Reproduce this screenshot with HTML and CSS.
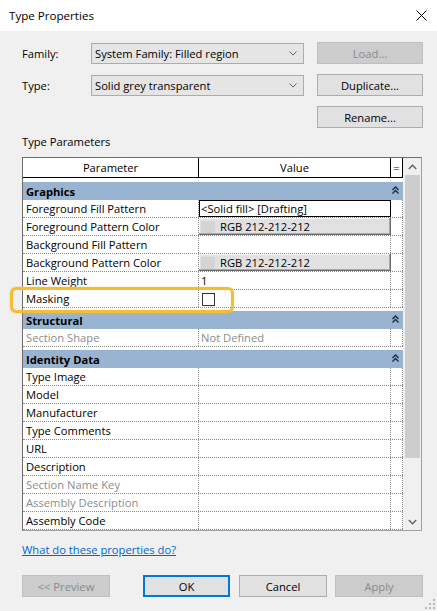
FILE: index.html
```html
<!DOCTYPE html>
<html>
<head>
<meta charset="utf-8">
<title>Type Properties</title>
<link rel="stylesheet" href="styles.css">
</head>
<body>
<div class="window">
  <div class="titlebar">
    <span class="title">Type Properties</span>
    <svg class="close" width="11" height="11" viewBox="0 0 11 11"><path d="M0.5 0.5 L10.5 10.5 M10.5 0.5 L0.5 10.5" stroke="#000" stroke-width="1" fill="none"/></svg>
  </div>
  <div class="content">
    <div class="top-grid">
      <span class="lbl">Family:</span>
      <div class="combo"><span>System Family: Filled region</span><svg width="8" height="5" viewBox="0 0 8 5"><path d="M0.5 0.5 L4 4 L7.5 0.5" stroke="#606060" fill="none"/></svg></div>
      <button class="btn disabled">Load...</button>
      <span class="lbl">Type:</span>
      <div class="combo"><span>Solid grey transparent</span><svg width="8" height="5" viewBox="0 0 8 5"><path d="M0.5 0.5 L4 4 L7.5 0.5" stroke="#606060" fill="none"/></svg></div>
      <button class="btn">Duplicate...</button>
      <button class="btn third">Rename...</button>
    </div>
    <div class="section-label">Type Parameters</div>
    <div class="table">
      <div class="grid">
        <div class="hdr"><div>Parameter</div><div>Value</div><div>=</div></div>

        <div class="sec first"><span>Graphics</span><svg width="7" height="8" viewBox="0 0 7 8"><path d="M0.5 4 L3.5 1 L6.5 4 M0.5 7.5 L3.5 4.5 L6.5 7.5" fill="none" stroke="#1c2440" stroke-width="1.3"/></svg></div>
        <div class="row"><div>Foreground Fill Pattern</div><div class="v box">&lt;Solid fill&gt; [Drafting]</div><div></div></div>
        <div class="row"><div>Foreground Pattern Color</div><div class="v color"><span class="swatch"></span>RGB 212-212-212</div><div></div></div>
        <div class="row"><div>Background Fill Pattern</div><div class="v"></div><div></div></div>
        <div class="row"><div>Background Pattern Color</div><div class="v color"><span class="swatch"></span>RGB 212-212-212</div><div></div></div>
        <div class="row"><div>Line Weight</div><div class="v">1</div><div></div></div>
        <div class="row masking"><div>Masking</div><div class="v"><span class="check"></span></div><div></div><span class="hl"></span></div>

        <div class="sec"><span>Structural</span><svg width="7" height="8" viewBox="0 0 7 8"><path d="M0.5 4 L3.5 1 L6.5 4 M0.5 7.5 L3.5 4.5 L6.5 7.5" fill="none" stroke="#1c2440" stroke-width="1.3"/></svg></div>
        <div class="row dim"><div>Section Shape</div><div class="v">Not Defined</div><div></div></div>

        <div class="sec"><span>Identity Data</span><svg width="7" height="8" viewBox="0 0 7 8"><path d="M0.5 4 L3.5 1 L6.5 4 M0.5 7.5 L3.5 4.5 L6.5 7.5" fill="none" stroke="#1c2440" stroke-width="1.3"/></svg></div>
        <div class="row"><div>Type Image</div><div class="v"></div><div></div></div>
        <div class="row"><div>Model</div><div class="v"></div><div></div></div>
        <div class="row"><div>Manufacturer</div><div class="v"></div><div></div></div>
        <div class="row"><div>Type Comments</div><div class="v"></div><div></div></div>
        <div class="row"><div>URL</div><div class="v"></div><div></div></div>
        <div class="row"><div>Description</div><div class="v"></div><div></div></div>
        <div class="row dim"><div>Section Name Key</div><div class="v"></div><div></div></div>
        <div class="row dim"><div>Assembly Description</div><div class="v"></div><div></div></div>
        <div class="row"><div>Assembly Code</div><div class="v"></div><div></div></div>
      </div>
      <div class="scroll">
        <div class="sb-btn"><svg width="9" height="6" viewBox="0 0 9 6"><path d="M0.8 5 L4.5 1.2 L8.2 5" fill="none" stroke="#606060" stroke-width="1.4"/></svg></div>
        <div class="thumb"></div>
        <div class="track"></div>
        <div class="sb-btn"><svg width="9" height="6" viewBox="0 0 9 6"><path d="M0.8 1 L4.5 4.8 L8.2 1" fill="none" stroke="#606060" stroke-width="1.4"/></svg></div>
      </div>
    </div>
    <a class="help" href="#">What do these properties do?</a>
    <div class="footer">
      <button class="btn fbtn disabled">&lt;&lt; Preview</button>
      <button class="btn fbtn ok">OK</button>
      <button class="btn fbtn cancel">Cancel</button>
      <button class="btn fbtn apply disabled">Apply</button>
    </div>
  </div>
  <svg class="grip" width="10" height="10" viewBox="0 0 10 10">
    <rect x="8" y="0" width="2" height="2" fill="#b8b8b8"/>
    <rect x="4" y="4" width="2" height="2" fill="#b8b8b8"/>
    <rect x="8" y="4" width="2" height="2" fill="#b8b8b8"/>
    <rect x="0" y="8" width="2" height="2" fill="#b8b8b8"/>
    <rect x="4" y="8" width="2" height="2" fill="#b8b8b8"/>
    <rect x="8" y="8" width="2" height="2" fill="#b8b8b8"/>
  </svg>
</div>
</body>
</html>
```

FILE: styles.css
```css
* { box-sizing: border-box; }
html, body { margin: 0; padding: 0; }
body {
  width: 437px;
  height: 611px;
  overflow: hidden;
  background: #f0f0f0;
  font-family: "Open Sans", "Noto Sans", sans-serif;
  font-size: 11.2px;
  color: #000;
}
.window { position: relative; height: 611px; }

.titlebar {
  height: 31px;
  background: #fff;
  display: flex;
  align-items: center;
  justify-content: space-between;
  padding: 0 10px 0 9px;
}
.title { font-size: 11.6px; }
.close { display: block; }

.content { padding: 11px 0 0 22px; }

.top-grid {
  display: grid;
  grid-template-columns: 69px 226px 106px;
  grid-auto-rows: 22px;
  row-gap: 10px;
}
.lbl { align-self: center; }
.combo {
  align-self: center;
  width: 213px;
  height: 21px;
  border: 1px solid #acacac;
  background: #e5e5e5;
  display: flex;
  align-items: center;
  justify-content: space-between;
  padding: 0 6px 0 3px;
}
.combo svg { display: block; }
.btn {
  width: 106px;
  height: 22px;
  border: 1px solid #adadad;
  background: #e1e1e1;
  font: inherit;
  color: #000;
  padding: 0;
  margin: 0;
}
.btn.disabled { background: #cccccc; border-color: #bfbfbf; color: #8a8a8a; }
.btn.third { grid-column: 3; }

.section-label { margin-top: 6px; line-height: 16px; }

.table {
  position: relative;
  margin-top: 7px;
  width: 400px;
  height: 374px;
  border: 1px solid #a0a0a0;
  border-top-color: #6d6d6d;
  border-left-color: #6d6d6d;
  background: #fff;
  display: flex;
}
.grid { width: 380px; flex: none; }

.hdr {
  display: grid;
  grid-template-columns: 176px 192px 12px;
  height: 20px;
  border-bottom: 1px solid #000;
  background: #fff;
}
.hdr > div {
  border-right: 1px solid #000;
  text-align: center;
  line-height: 19px;
}

.sec {
  margin-top: 3px;
  height: 18px;
  background: #99b4d1;
  font-weight: 700;
  display: flex;
  align-items: center;
  justify-content: space-between;
  padding: 0 4px 0 3px;
}
.sec.first { margin-top: 4px; }
.sec svg { display: block; margin-top: -2px; }

.row {
  position: relative;
  display: grid;
  grid-template-columns: 176px 192px 12px;
  height: 18px;
  border-bottom: 1px dotted #8a8a8a;
}
.row > div {
  border-right: 1px dotted #8a8a8a;
  line-height: 17px;
  padding-left: 3px;
  white-space: nowrap;
  overflow: hidden;
}
.row > .v { padding-left: 2px; }
.row > .v.box { border: 1px solid #000; padding-left: 1px; line-height: 15px; }
.row > .v.color {
  background: #e1e1e1;
  border-right: none;
  box-shadow: inset -1px -1px 0 #6a6a6a, inset -2px -2px 0 #a8a8a8, inset 1px 1px 0 #f8f8f8;
  display: flex;
  align-items: center;
}
.swatch {
  display: inline-block;
  width: 14px;
  height: 12px;
  background: #d4d4d4;
  margin-right: 5px;
}
.check {
  display: inline-block;
  width: 13px;
  height: 13px;
  border: 1px solid #333;
  background: #fff;
  margin-left: 1px;
  vertical-align: middle;
  margin-top: -2px;
}
.row.dim > div { color: #8c8c8c; }

.hl {
  position: absolute;
  left: -13px;
  top: -3px;
  width: 224px;
  height: 26px;
  border: 3px solid #f4bd33;
  border-radius: 6px;
  box-shadow: 0 0 2px rgba(244, 189, 51, 0.6), inset 0 0 1px rgba(244, 189, 51, 0.6);
  pointer-events: none;
}

.scroll {
  width: 18px;
  display: flex;
  flex-direction: column;
  background: #f0f0f0;
}
.sb-btn {
  height: 17px;
  display: flex;
  align-items: center;
  justify-content: center;
}
.sb-btn svg { display: block; }
.thumb { height: 283px; margin: 0 1px 0 2px; background: #cdcdcd; }
.track { flex: 1; }

.help {
  display: block;
  width: max-content;
  margin-top: 11px;
  line-height: 16px;
  color: #0066cc;
  text-decoration: underline;
}

.footer { display: flex; margin-top: 17px; }
.fbtn { width: 88px; }
.fbtn.ok { margin-left: 33px; width: 87px; border: 2px solid #0078d7; }
.fbtn.cancel { margin-left: 9px; }
.fbtn.apply { margin-left: 8px; }

.grip { position: absolute; right: 2px; bottom: 2px; }
```
